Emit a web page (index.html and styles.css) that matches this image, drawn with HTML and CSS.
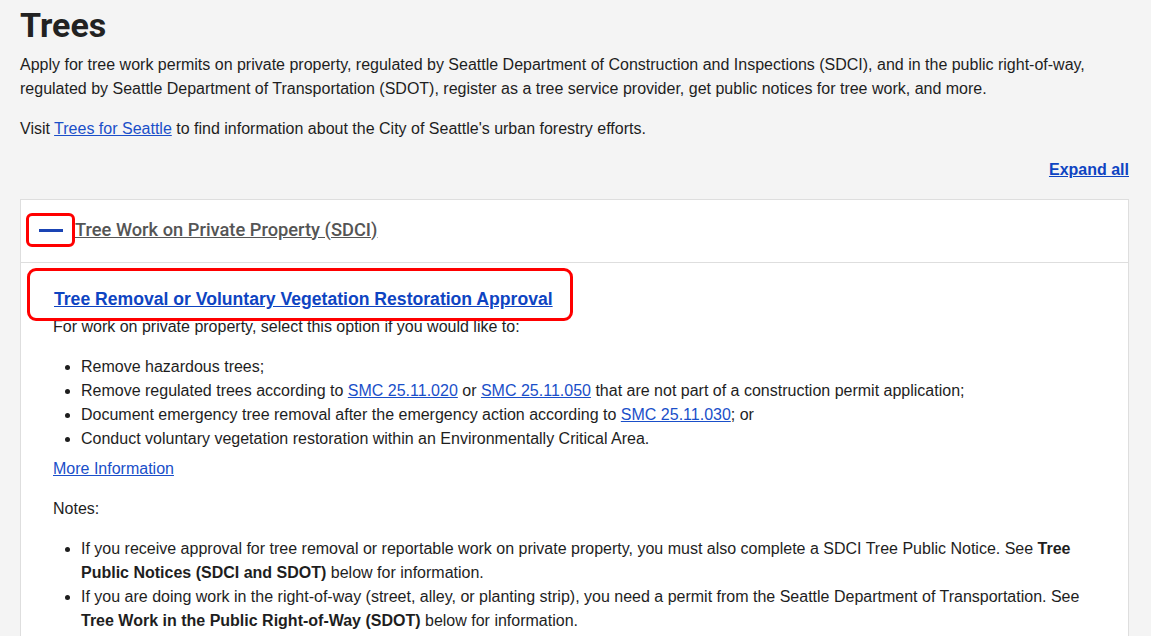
FILE: index.html
```html
<!DOCTYPE html>
<html lang="en">
<head>
    <meta charset="UTF-8">
    <meta name="viewport" content="width=device-width, initial-scale=1.0">
    <title>Trees</title>
    <link rel="stylesheet" href="styles.css">
</head>
<body>
    <main class="page">
        <h1 class="page-title">Trees</h1>
        <p class="intro">Apply for tree work permits on private property, regulated by Seattle Department of Construction and Inspections (SDCI), and in the public right-of-way, regulated by Seattle Department of Transportation (SDOT), register as a tree service provider, get public notices for tree work, and more.</p>
        <p class="intro">Visit <a href="#">Trees for Seattle</a> to find information about the City of Seattle's urban forestry efforts.</p>

        <div class="expand-row">
            <a href="#" class="expand-all">Expand all</a>
        </div>

        <section class="accordion">
            <div class="accordion-header">
                <button class="toggle" aria-expanded="true"><span class="minus"></span></button>
                <a href="#" class="accordion-title">Tree Work on Private Property (SDCI)</a>
            </div>
            <div class="accordion-body">
                <div class="highlight">
                    <a href="#" class="option-link">Tree Removal or Voluntary Vegetation Restoration Approval</a>
                </div>
                <p class="tucked">For work on private property, select this option if you would like to:</p>
                <ul>
                    <li>Remove hazardous trees;</li>
                    <li>Remove regulated trees according to <a href="#">SMC 25.11.020</a> or <a href="#">SMC 25.11.050</a> that are not part of a construction permit application;</li>
                    <li>Document emergency tree removal after the emergency action according to <a href="#">SMC 25.11.030</a>; or</li>
                    <li>Conduct voluntary vegetation restoration within an Environmentally Critical Area.</li>
                </ul>
                <p class="more"><a href="#">More Information</a></p>
                <p>Notes:</p>
                <ul>
                    <li>If you receive approval for tree removal or reportable work on private property, you must also complete a SDCI Tree Public Notice. See <b>Tree Public Notices (SDCI and SDOT)</b> below for information.</li>
                    <li>If you are doing work in the right-of-way (street, alley, or planting strip), you need a permit from the Seattle Department of Transportation. See <b>Tree Work in the Public Right-of-Way (SDOT)</b> below for information.</li>
                </ul>
            </div>
        </section>
    </main>
</body>
</html>
```

FILE: styles.css
```css
/* page */
body {
    margin: 0;
    background-color: #f4f4f4;
    font-family: "Liberation Sans", Arial, sans-serif;
    font-size: 16px;
    line-height: 24px;
    color: #1e1e1e;
}

.page {
    padding: 5px 22px 0 20px;
}

a {
    color: #1a4fc9;
}

.page-title {
    margin: 0 0 8px;
    font-family: Roboto, "Liberation Sans", sans-serif;
    font-size: 34px;
    line-height: 40px;
    font-weight: 700;
    color: #222;
}

.intro {
    margin: 0 0 16px;
}

.expand-row {
    display: flex;
    justify-content: flex-end;
    margin-top: 17px;
    margin-bottom: 17px;
}

.expand-all {
    font-weight: bold;
    color: #0e44c2;
}

/* accordion */
.accordion {
    background-color: #fff;
    border: 1px solid #dedede;
}

.accordion-header {
    display: flex;
    align-items: center;
    height: 62px;
    padding-left: 5px;
    border-bottom: 1px solid #dedede;
}

.toggle {
    display: flex;
    align-items: center;
    justify-content: center;
    width: 49px;
    height: 34px;
    margin-top: -2px;
    padding: 0;
    border: 3px solid #f00;
    border-radius: 6px;
    background: #fff;
    cursor: pointer;
}

.minus {
    display: block;
    width: 24px;
    height: 3px;
    background-color: #1a44b4;
}

.accordion-title {
    margin-top: -3px;
    font-family: Roboto, "Liberation Sans", sans-serif;
    font-size: 18.3px;
    font-weight: 500;
    color: #555;
}

.accordion-body {
    padding: 5px 20px 12px 32px;
}

.accordion-body p {
    margin: 0 0 16px;
}

.highlight {
    position: relative;
    z-index: 1;
    width: 499px;
    margin-left: -26px;
    padding: 16px 17px 6px 24px;
    border: 3px solid #f00;
    border-radius: 9px;
    background: #fff;
}

.option-link {
    font-weight: bold;
    font-size: 17.6px;
    color: #0e44c2;
}

.accordion-body .tucked {
    margin-top: -6px;
}

.accordion-body ul {
    margin: 0;
    padding-left: 28px;
}

.accordion-body .more {
    margin-top: 6px;
}
```
